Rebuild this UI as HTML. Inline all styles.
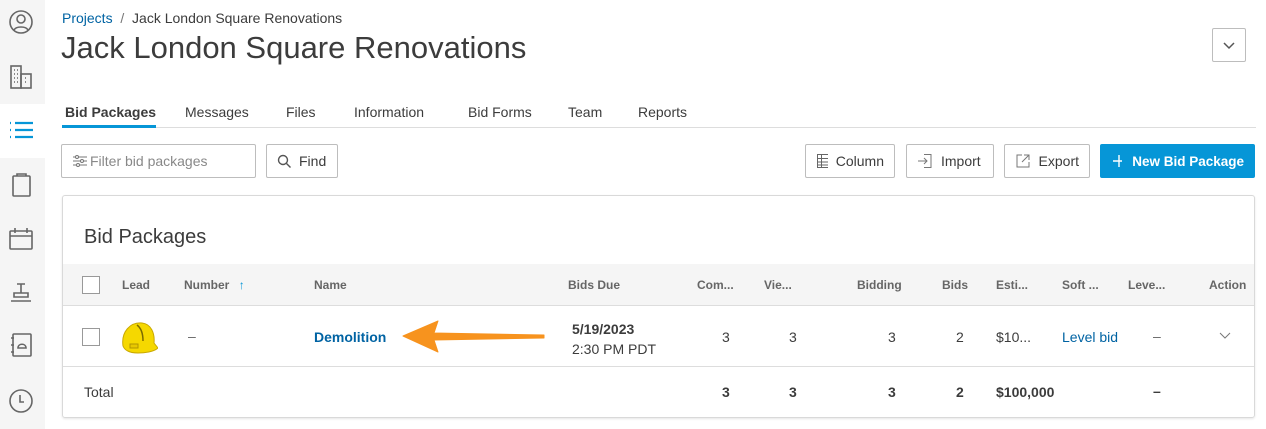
<!DOCTYPE html>
<html><head><meta charset="utf-8"><style>
*{box-sizing:border-box;margin:0;padding:0}
body{width:1266px;height:429px;background:#fff;font-family:"Liberation Sans",sans-serif;color:#3c3c3c;position:relative;overflow:hidden;font-size:14px}
.a{position:absolute;white-space:nowrap}
.side{position:absolute;left:0;top:0;width:45px;height:429px;background:#f5f5f5}
.btn{position:absolute;top:144px;height:34px;border:1px solid #bdbdbd;border-radius:2px;background:#fff;font-size:14px;color:#3c3c3c;display:flex;align-items:center;gap:8px;padding:0 10px;white-space:nowrap}
.th{position:absolute;top:278px;font-size:12px;font-weight:bold;color:#666;white-space:nowrap}
.td{position:absolute;font-size:14px;color:#3c3c3c;white-space:nowrap}
.cb{position:absolute;left:82px;width:18px;height:18px;border:1px solid #999;background:#fff}
</style></head><body>
<div class="side">
<div style="position:absolute;top:104px;left:0;width:45px;height:54px;background:#fff"></div>
<svg width="45" height="429" style="position:absolute;left:0;top:0" fill="none" stroke="#666" stroke-width="1.6">
<circle cx="21" cy="22" r="11"/><circle cx="21" cy="19" r="4"/><path d="M14 30c2-4 12-4 14 0"/>
<rect x="11" y="66" width="10" height="22"/><rect x="21" y="74" width="10" height="14"/>
<path d="M14 70h1M17 70h1M14 74h1M17 74h1M14 78h1M17 78h1M14 82h1M17 82h1M25 78h1M25 82h1" stroke-width="1.5"/>
<path d="M10 123h1M15 123h18M10 130h1M15 130h18M10 137h1M15 137h18" stroke="#0696d7" stroke-width="2.2"/>
<rect x="13" y="176" width="17" height="20" rx="1"/><path d="M17 176v-2h9v2"/>
<rect x="10" y="231" width="22" height="18" rx="1"/><path d="M10 236h22M15 228v5M27 228v5"/>
<path d="M17 284h8M21 284v9M14 293h14v4H14zM11 301h20"/>
<rect x="13" y="334" width="18" height="22" rx="1"/><path d="M11 338h3M11 345h3M11 352h3M18 348c0-5 8-5 8 0z"/>
<circle cx="21" cy="401" r="11"/><path d="M20 395v7h4"/>
</svg>
</div>
<div class="a" style="left:62px;top:10px;font-size:14px"><span style="color:#0063a3">Projects</span> <span style="color:#777">&nbsp;/&nbsp;</span> Jack London Square Renovations</div>
<div class="a" style="left:61px;top:30px;font-size:31px;color:#3c3c3c">Jack London Square Renovations</div>
<div class="a" style="left:1212px;top:28px;width:34px;height:34px;border:1px solid #bdbdbd;border-radius:2px"><svg width="32" height="32"><path d="M11 14l5 5 5-5" stroke="#555" fill="none" stroke-width="1.5"/></svg></div>
<div class="a" style="left:62px;top:127px;width:1194px;height:1px;background:#ddd"></div>
<div class="a" style="left:62px;top:125px;width:94px;height:3px;background:#0696d7"></div>
<div class="a" style="top:104px;left:65px;font-size:14px;font-weight:bold;color:#3c3c3c">Bid Packages</div>
<div class="a" style="top:104px;left:185px">Messages</div>
<div class="a" style="top:104px;left:286px">Files</div>
<div class="a" style="top:104px;left:354px">Information</div>
<div class="a" style="top:104px;left:468px">Bid Forms</div>
<div class="a" style="top:104px;left:568px">Team</div>
<div class="a" style="top:104px;left:638px">Reports</div>
<div class="btn" style="left:61px;width:195px;padding-left:10px;color:#888"><svg width="16" height="16" fill="none" stroke="#777"><path d="M1 4h14M1 8h14M1 12h14"/><circle cx="5" cy="4" r="1.5" fill="#fff"/><circle cx="10" cy="8" r="1.5" fill="#fff"/><circle cx="6" cy="12" r="1.5" fill="#fff"/></svg><span style="margin-left:-6px">Filter bid packages</span></div>
<div class="btn" style="left:266px;width:72px"><svg width="14" height="14" fill="none" stroke="#555" stroke-width="1.4"><circle cx="6" cy="6" r="4.5"/><path d="M9.5 9.5l4 4"/></svg>Find</div>
<div class="btn" style="left:805px;width:90px"><svg width="16" height="16" fill="none" stroke="#666"><rect x="1.5" y="1.5" width="13" height="13"/><path d="M1.5 5.5h13M1.5 9h13M1.5 12h13M5.5 1.5v13"/></svg>Column</div>
<div class="btn" style="left:906px;width:88px"><svg width="16" height="16" fill="none" stroke="#777"><path d="M7 1.5h7v13H7M1 8h9M7 5l3 3-3 3"/></svg>Import</div>
<div class="btn" style="left:1004px;width:86px"><svg width="16" height="16" fill="none" stroke="#777"><path d="M7 2H2v12h12V9M9 2h5v5M14 2L7 9"/></svg>Export</div>
<div class="btn" style="left:1100px;width:155px;background:#0696d7;border-color:#0696d7;color:#fff;font-weight:bold;gap:10px;padding-left:12px;font-size:13.5px"><svg width="12" height="12" stroke="#fff" stroke-width="1.4"><path d="M6 0v12M0 6h12"/></svg>New Bid Package</div>
<div class="a" style="left:62px;top:195px;width:1193px;height:223px;border:1px solid #d9d9d9;border-radius:3px;box-shadow:0 1px 2px rgba(0,0,0,.1)"></div>
<div class="a" style="left:84px;top:226px;font-size:20px;color:#3c3c3c">Bid Packages</div>
<div class="a" style="left:63px;top:264px;width:1191px;height:42px;background:#f5f5f5;border-bottom:1px solid #ddd"></div>
<div class="a" style="left:63px;top:366px;width:1191px;height:1px;background:#ddd"></div>
<div class="cb" style="top:276px"></div>
<div class="th" style="left:122px">Lead</div>
<div class="th" style="left:184px">Number <span style="color:#0696d7;margin-left:6px">↑</span></div>
<div class="th" style="left:314px">Name</div>
<div class="th" style="left:568px">Bids Due</div>
<div class="th" style="left:697px">Com...</div>
<div class="th" style="left:764px">Vie...</div>
<div class="th" style="left:857px">Bidding</div>
<div class="th" style="left:942px">Bids</div>
<div class="th" style="left:996px">Esti...</div>
<div class="th" style="left:1062px">Soft ...</div>
<div class="th" style="left:1128px">Leve...</div>
<div class="th" style="left:1209px">Action</div>
<div class="cb" style="top:328px"></div>
<svg class="a" style="left:120px;top:318px" width="38" height="38"><path d="M3 28C1 14 10 4 22 5c9 1 13 10 12 20l4 5c-4 4-14 5-20 5C10 35 5 33 3 28z" fill="#f5d800" stroke="#c9a800"/><path d="M17 7c4 3 6 9 6 16" stroke="#7a6a00" stroke-width="1.5" fill="none"/><rect x="10" y="26" width="8" height="4" fill="#e8c800" stroke="#b39600"/></svg>
<div class="td" style="left:188px;top:328px;color:#666">–</div>
<div class="td" style="left:314px;top:329px;font-weight:bold;color:#0063a3">Demolition</div>
<svg class="a" style="left:400px;top:316px" width="150" height="40"><path d="M3 20L38 5l-4 12 110 2v3L34 24l4 12z" fill="#f7931e" stroke="#f7931e" stroke-linejoin="round"/></svg>
<div class="td" style="left:572px;top:321px;font-weight:bold">5/19/2023</div>
<div class="td" style="left:572px;top:341px">2:30 PM PDT</div>
<div class="td" style="left:722px;top:329px">3</div>
<div class="td" style="left:789px;top:329px">3</div>
<div class="td" style="left:888px;top:329px">3</div>
<div class="td" style="left:956px;top:329px">2</div>
<div class="td" style="left:996px;top:329px">$10...</div>
<div class="td" style="left:1062px;top:329px;color:#0063a3;width:56px;overflow:hidden">Level bids</div>
<div class="td" style="left:1153px;top:328px;color:#666">–</div>
<svg class="a" style="left:1219px;top:332px" width="12" height="8"><path d="M1 1l5 5 5-5" stroke="#777" fill="none"/></svg>
<div class="td" style="left:84px;top:384px">Total</div>
<div class="td" style="left:722px;top:384px;font-weight:bold">3</div>
<div class="td" style="left:789px;top:384px;font-weight:bold">3</div>
<div class="td" style="left:888px;top:384px;font-weight:bold">3</div>
<div class="td" style="left:956px;top:384px;font-weight:bold">2</div>
<div class="td" style="left:996px;top:384px;font-weight:bold;width:58px;overflow:hidden">$100,000</div>
<div class="td" style="left:1153px;top:383px;font-weight:bold">–</div>
</body></html>
